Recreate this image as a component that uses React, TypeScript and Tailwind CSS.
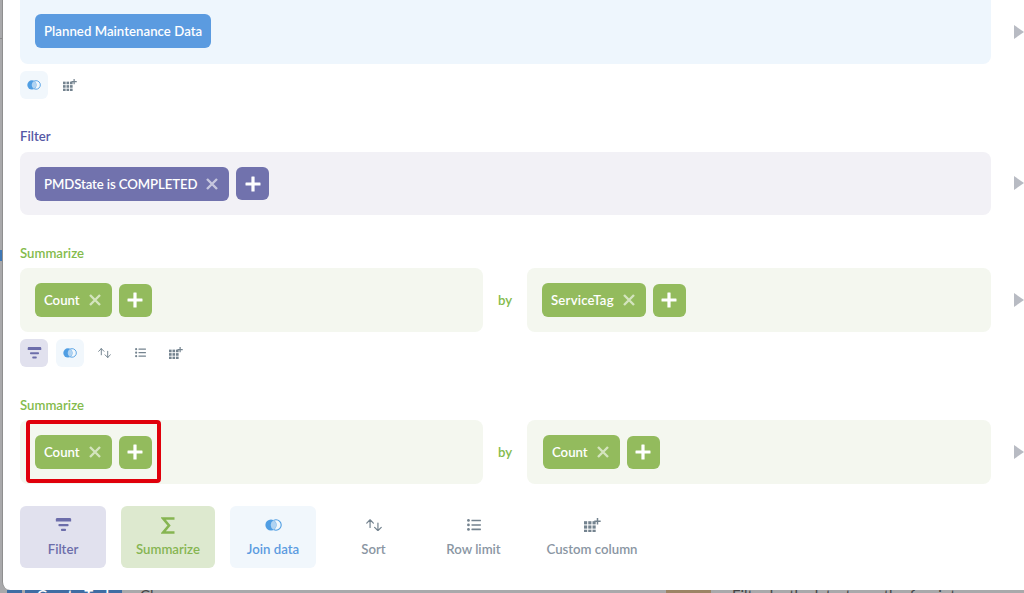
import React from "react";

const FilterIcon = ({ c, s = 20 }: { c: string; s?: number }) => (
  <svg width={s} height={s * 0.8} viewBox="0 0 20 16" fill={c}>
    <path d="M1 1.5C1 .7 1.7 0 2.5 0h15c.8 0 1.5.7 1.5 1.5V4H1z" />
    <rect x="4" y="7" width="12" height="2.6" rx="1" />
    <rect x="7" y="12.6" width="6" height="2.6" rx="1" />
  </svg>
);

const JoinIcon = ({ s = 17 }: { s?: number }) => (
  <svg width={s} height={(s * 12) / 17} viewBox="0 0 17 12">
    <circle cx="11" cy="6" r="5.2" fill="none" stroke="#509ee3" strokeWidth="1.1" />
    <circle cx="6" cy="6" r="5.6" fill="#509ee3" />
    <path d="M8.5 1.2a5.5 5.5 0 0 1 0 9.6a5.5 5.5 0 0 1 0-9.6z" fill="#fff" opacity="0.55" />
  </svg>
);

const SortIcon = ({ s = 16 }: { s?: number }) => (
  <svg width={s} height={s * 0.78} viewBox="0 0 12.6 9.8" fill="none" stroke="#74838f" strokeWidth="0.95" strokeLinecap="round" strokeLinejoin="round">
    <path d="M3.2 6.6V.6M.6 3.2L3.2.6l2.6 2.6" />
    <path d="M9.4 3.2v6M6.8 6.6l2.6 2.6 2.6-2.6" />
  </svg>
);

const ListIcon = ({ s = 14 }: { s?: number }) => (
  <svg width={s} height={s * 0.85} viewBox="0 0 14 12" fill="#74838f">
    <circle cx="1.4" cy="1.5" r="1.4" />
    <circle cx="1.4" cy="6" r="1.4" />
    <circle cx="1.4" cy="10.5" r="1.4" />
    <rect x="4.4" y="0.7" width="9.6" height="1.6" rx="0.4" />
    <rect x="4.4" y="5.2" width="9.6" height="1.6" rx="0.4" />
    <rect x="4.4" y="9.7" width="9.6" height="1.6" rx="0.4" />
  </svg>
);

const ColumnIcon = ({ s = 16 }: { s?: number }) => (
  <svg width={s} height={s * 0.875} viewBox="0 0 16 14" fill="#74838f">
    {[3, 7, 11].flatMap((y) =>
      [0, 4, 8].map((x) => <rect key={`${x}-${y}`} x={x} y={y} width="3" height="3" />)
    )}
    <path d="M12 0h1.4v2.3h2.3v1.4h-2.3V6H12V3.7H9.7V2.3H12z" />
  </svg>
);

const SigmaIcon = () => (
  <svg width="14" height="17" viewBox="0 0 14 17" fill="none" stroke="#86b552" strokeWidth="2.6">
    <path d="M13.5 1.5H2.2L8 8.5L2.2 15.5H13.5" />
  </svg>
);

const PlusIcon = () => (
  <svg width="16" height="16" viewBox="0 0 16 16" fill="#fff">
    <rect x="6.4" y="0.5" width="3.2" height="15" rx="0.5" />
    <rect x="0.5" y="6.4" width="15" height="3.2" rx="0.5" />
  </svg>
);

const XIcon = () => (
  <svg width="12" height="12" viewBox="0 0 12 12" stroke="#fff" strokeOpacity="0.6" strokeWidth="2.4" fill="none">
    <path d="M1 1l10 10M11 1L1 11" />
  </svg>
);

const Chip = ({ label, bg, close = true, track = "" }: { label: string; bg: string; close?: boolean; track?: string }) => (
  <div className={`flex h-[34px] items-center rounded-md pl-[9px] text-[13.2px] font-semibold text-white ${bg} ${close ? "pr-[11px]" : "pr-[9px]"}`}>
    <span className={`pt-[2px] ${track}`}>{label}</span>
    {close && (
      <span className="ml-[9px] flex">
        <XIcon />
      </span>
    )}
  </div>
);

const PlusBtn = ({ bg }: { bg: string }) => (
  <div className={`flex h-[33px] w-[33px] items-center justify-center rounded-md ${bg}`}>
    <PlusIcon />
  </div>
);

const Arrow = () => (
  <div className="h-0 w-0 border-y-[7px] border-l-[10px] border-y-transparent border-l-[#b8bbc3]" />
);

const SmallBtn = ({ bg, children }: { bg?: string; children: React.ReactNode }) => (
  <div className={`flex h-7 w-7 items-center justify-center rounded-md ${bg ?? ""}`}>{children}</div>
);

const GREEN = "bg-[#93bb5d]";
const PURPLE = "bg-[#7172ad]";

const BigBtn = ({ w, bg, text, icon, label }: { w: string; bg?: string; text: string; icon: React.ReactNode; label: string }) => (
  <div className={`flex h-[62px] flex-col items-center justify-end rounded-md pb-[11px] text-[13.2px] font-semibold ${w} ${bg ?? ""} ${text}`}>
    <div className="flex h-5 items-center">{icon}</div>
    <div className="mt-[6px] leading-[16px]">{label}</div>
  </div>
);

const Row = ({ right, pad, track }: { right: string; pad: string; track?: string }) => (
  <div className="mt-[6px] flex items-center">
    <div className="flex h-[64px] w-[463px] items-center gap-[7px] rounded-lg bg-[#f4f7ef] pl-[15px]">
      <Chip label="Count" bg={GREEN} />
      <PlusBtn bg={GREEN} />
    </div>
    <div className="flex w-[44px] justify-center pt-[2px] text-[13.2px] font-semibold text-[#84bb4c]">by</div>
    <div className={`flex h-[64px] w-[464px] items-center gap-[7px] rounded-lg bg-[#f4f7ef] ${pad}`}>
      <Chip label={right} bg={GREEN} track={track} />
      <PlusBtn bg={GREEN} />
    </div>
  </div>
);

export default function App() {
  return (
    <div className="relative h-[593px] w-[1024px] overflow-hidden bg-[#a9a9ab] font-['Lato','Noto_Sans',sans-serif]">
      <div className="absolute left-0 top-[250px] h-[11px] w-[2px] bg-[#3f78b5]" />
      <div className="absolute left-0 top-[38px] h-px w-[2px] bg-[#8a8a8a]" />
      <div className="absolute bottom-0 left-[7px] h-[3px] w-[15px] bg-[#3f6da3]" />
      <div className="absolute bottom-0 left-[25px] h-[3px] w-[97px] bg-[#3f6da3]" />
      <div className="absolute bottom-0 left-[666px] h-[3px] w-[45px] bg-[#9c8465]" />
      <div className="absolute left-[37px] top-[586px] text-[15px] font-semibold leading-[18px] text-white">Create Task</div>
      <div className="absolute left-[140px] top-[586px] text-[15px] leading-[18px] text-[#444]">Close</div>
      <div className="absolute left-[732px] top-[586px] text-[15px] leading-[18px] text-[#444]">Filter by the latest month of maintenance</div>
      <div className="relative ml-[2px] h-[590px] rounded-bl-lg border-l border-[#8f8f8f] bg-white pl-[17px] pr-[33px]">
        <div className="flex h-[64px] items-start rounded-b-lg bg-[#eef6fd] pl-[15px] pt-[14px]">
          <Chip label="Planned Maintenance Data" bg="bg-[#5b9be0]" close={false} track="tracking-[0.04px]" />
        </div>
        <div className="mt-[7px] flex gap-2">
          <SmallBtn bg="bg-[#f1f7fc]"><JoinIcon s={14} /></SmallBtn>
          <SmallBtn><ColumnIcon s={14} /></SmallBtn>
        </div>

        <div className="mt-[28px] h-[18px] text-[13.2px] font-semibold leading-[18px] text-[#5558a5]">Filter</div>
        <div className="mt-[7px] flex h-[63px] items-center gap-[7px] rounded-lg bg-[#f2f1f6] pl-[15px]">
          <Chip label="PMDState is COMPLETED" bg={PURPLE} track="tracking-[-0.1px]" />
          <PlusBtn bg={PURPLE} />
        </div>

        <div className="mt-[29px] h-[18px] text-[13.2px] font-semibold leading-[18px] text-[#84bb4c]">Summarize</div>
        <Row right="ServiceTag" pad="pl-[15px]" track="tracking-[0.2px]" />
        <div className="mt-[7px] flex gap-2">
          <SmallBtn bg="bg-[#e1e1ee]"><FilterIcon c="#6c6daa" s={15} /></SmallBtn>
          <SmallBtn bg="bg-[#f1f7fc]"><JoinIcon s={14} /></SmallBtn>
          <div className="-ml-[2px]"><SmallBtn><SortIcon s={13} /></SmallBtn></div>
          <SmallBtn><ListIcon s={11} /></SmallBtn>
          <SmallBtn><ColumnIcon s={14} /></SmallBtn>
        </div>

        <div className="mt-[29px] h-[18px] text-[13.2px] font-semibold leading-[18px] text-[#84bb4c]">Summarize</div>
        <Row right="Count" pad="pl-[16px]" />

        <div className="mt-[22px] flex">
          <BigBtn w="w-[86px]" bg="bg-[#e1e1ee]" text="text-[#6c6daa]" icon={<FilterIcon c="#6c6daa" s={17} />} label="Filter" />
          <div className="w-[15px]" />
          <BigBtn w="w-[94px]" bg="bg-[#dde9cf]" text="text-[#86b552]" icon={<SigmaIcon />} label="Summarize" />
          <div className="w-[15px]" />
          <BigBtn w="w-[86px]" bg="bg-[#f1f7fc]" text="text-[#5b9be0]" icon={<JoinIcon s={17} />} label="Join data" />
          <div className="w-[15px]" />
          <BigBtn w="w-[85px]" text="text-[#8a96a3]" icon={<SortIcon s={16} />} label="Sort" />
          <div className="w-[15px]" />
          <BigBtn w="w-[85px]" text="text-[#8a96a3]" icon={<ListIcon s={14} />} label="Row limit" />
          <div className="w-[15px]" />
          <BigBtn w="w-[122px]" text="text-[#8a96a3]" icon={<ColumnIcon s={17} />} label="Custom column" />
        </div>

        <div className="absolute right-0 top-[25px]"><Arrow /></div>
        <div className="absolute right-0 top-[176px]"><Arrow /></div>
        <div className="absolute right-0 top-[293px]"><Arrow /></div>
        <div className="absolute right-0 top-[445px]"><Arrow /></div>
        <div className="absolute left-[23px] top-[420px] h-[63px] w-[135px] rounded-sm border-[4px] border-[#e0000b]" />
      </div>
    </div>
  );
}
